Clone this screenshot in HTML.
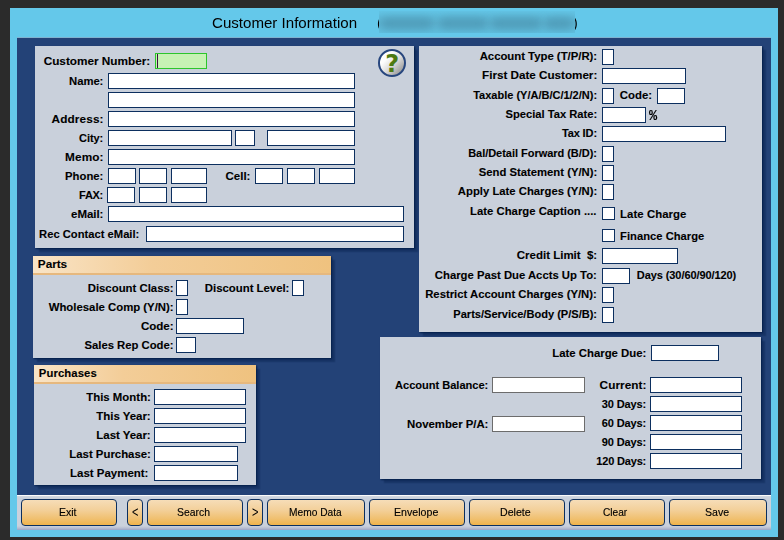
<!DOCTYPE html>
<html lang="en"><head><meta charset="utf-8"><title>Customer Information</title>
<style>
html,body{margin:0;padding:0;background:#2b2b2b}
body{width:784px;height:540px;background:#2b2b2b;position:relative;overflow:hidden;font-family:"Liberation Sans",sans-serif;font-size:12px;color:#000;}
div,span,input,button,label,h1,h2{box-sizing:border-box;margin:0}
.win,.inner,.panel,.hdr,.in,.t,.btn,.bar,.blur,.help,.cb{position:absolute}
.win{left:10px;top:8px;width:768px;height:529px;background:#64c8ea}
.inner{left:17px;top:37px;width:754px;height:458px;background:#234277;border-top:1px solid #7fb2cf}
.panel{background:#c9d0db;box-shadow:1px 1px 1.5px rgba(0,28,70,.9),4px 4px 1.2px rgba(4,32,76,.38)}
.hdr{left:0;top:0;right:0;height:19px;background:linear-gradient(90deg,#f9e4c6 0%,#f3cd98 40%,#efc27f 100%);border-bottom:2px solid #e6b87e}
.in{background:#fff;border:1px solid #0c2f5f;padding:0;border-radius:0;outline:0;-webkit-appearance:none;appearance:none;font:inherit;display:block}
.in.g{border-color:#6c6c6c}
.in.cur{background:#c6f2b4;border-color:#2cc52c}
.caret{position:absolute;left:157px;top:54px;width:1px;height:14px;background:#3a1040}
.t{white-space:nowrap;line-height:16px;height:16px;font-weight:normal;display:block}
.n{-webkit-text-stroke:0.15px #000}
.b{font-weight:bold;-webkit-text-stroke:0.1px #000}
.bar{left:17px;top:495px;width:754px;height:35px;background:linear-gradient(180deg,#fbfbfc 0,#fbfbfc 1px,#d3d8e1 1px,#cad1dc 3px,#cad1dc 31px,#b9bfd2 33px,#9ca4c6 35px)}
.btn{top:499px;height:27px;padding:0;font:inherit;color:inherit;text-align:left;-webkit-appearance:none;appearance:none;display:block;border:1px solid #0c2f5f;border-radius:4px;background:linear-gradient(180deg,#f6ddb8 0%,#f3d09a 40%,#f0c070 75%,#f0b34b 100%)}
.blur{left:379px;top:11px;width:196px;height:22px;overflow:hidden;background:linear-gradient(180deg,#63c5e6 0,#5fbad9 30%,#5db4d2 55%,#5fbad9 80%,#61c0e0 100%)}
.blur i{position:absolute;display:block;top:7px;height:11px;background:#4f9cb9;filter:blur(4px);border-radius:5px}
.help{left:378px;top:49px;width:28px;height:28px;border-radius:50%;border:2px solid #27467e;background:linear-gradient(135deg,#ffffff 0%,#fdfdfd 30%,#dcdcdc 55%,#a0a0a0 85%,#8c8c8c 100%);color:#4d7a12;font-family:'DejaVu Sans',sans-serif;font-weight:bold;font-size:24px;line-height:27px;text-align:center;text-indent:0.5px}
</style></head>
<body>
<div class="win"></div>
<div class="inner"></div>
<h1 class="t" style="left:212.07px;top:15.00px;font-size:15.4px;transform:scaleX(0.98);transform-origin:0 0">Customer Information</h1>
<div class="t" style="left:376.50px;top:15.00px;font-size:15.4px;transform:scaleX(0.95);transform-origin:0 0">(</div>
<div class="t" style="left:573.40px;top:15.00px;font-size:15.4px;transform:scaleX(0.92);transform-origin:0 0">)</div>
<div class="blur"><i style="left:2px;width:52px"></i><i style="left:60px;width:48px"></i><i style="left:112px;width:50px"></i><i style="left:166px;width:28px"></i></div>
<div class="panel" style="left:35px;top:46px;width:379px;height:202px"></div>
<label class="t b" style="left:43.69px;top:53.00px;font-size:11.8px;letter-spacing:-0.02px">Customer Number:</label>
<input type="text" class="in cur" id="f1" aria-label="Customer Number" style="left:155px;top:53px;width:52px;height:16px">
<div class="caret"></div>
<label class="t b" style="left:69.11px;top:73.00px;font-size:11.3px;letter-spacing:-0.07px">Name:</label>
<input type="text" class="in" id="f2" aria-label="Name" style="left:108px;top:73px;width:247px;height:16px">
<input type="text" class="in" id="f3" aria-label="Name" style="left:108px;top:92px;width:247px;height:16px">
<label class="t b" style="left:51.61px;top:111.00px;font-size:11.8px;letter-spacing:0.11px">Address:</label>
<input type="text" class="in" id="f4" aria-label="Address" style="left:108px;top:111px;width:247px;height:16px">
<label class="t b" style="left:79.10px;top:130.00px;font-size:11px;letter-spacing:-0.07px">City:</label>
<input type="text" class="in" id="f5" aria-label="City" style="left:108px;top:130px;width:124px;height:16px">
<input type="text" class="in" id="f6" aria-label="City" style="left:235px;top:130px;width:20px;height:16px">
<input type="text" class="in" id="f7" aria-label="City" style="left:267px;top:130px;width:88px;height:16px">
<label class="t b" style="left:65.11px;top:149.00px;font-size:11.8px;letter-spacing:0.1px">Memo:</label>
<input type="text" class="in" id="f8" aria-label="Memo" style="left:108px;top:149px;width:247px;height:16px">
<label class="t b" style="left:65.09px;top:168.00px;font-size:11.3px">Phone:</label>
<input type="text" class="in" id="f9" aria-label="Phone" style="left:108px;top:168px;width:28px;height:16px">
<input type="text" class="in" id="f10" aria-label="Phone" style="left:139px;top:168px;width:28px;height:16px">
<input type="text" class="in" id="f11" aria-label="Phone" style="left:171px;top:168px;width:36px;height:16px">
<label class="t b" style="left:225.59px;top:168.00px;font-size:11.5px;letter-spacing:-0.02px">Cell:</label>
<input type="text" class="in" id="f12" aria-label="Cell" style="left:255px;top:168px;width:28px;height:16px">
<input type="text" class="in" id="f13" aria-label="Cell" style="left:287px;top:168px;width:28px;height:16px">
<input type="text" class="in" id="f14" aria-label="Cell" style="left:319px;top:168px;width:36px;height:16px">
<label class="t b" style="left:79.10px;top:187.00px;font-size:11px;letter-spacing:-0.3px">FAX:</label>
<input type="text" class="in" id="f15" aria-label="FAX" style="left:107px;top:187px;width:28px;height:16px">
<input type="text" class="in" id="f16" aria-label="FAX" style="left:139px;top:187px;width:28px;height:16px">
<input type="text" class="in" id="f17" aria-label="FAX" style="left:171px;top:187px;width:36px;height:16px">
<label class="t b" style="left:71.09px;top:206.00px;font-size:11.5px;letter-spacing:-0.05px">eMail:</label>
<input type="text" class="in" id="f18" aria-label="eMail" style="left:108px;top:206px;width:296px;height:16px">
<label class="t b" style="left:39.08px;top:226.00px;font-size:11.2px;letter-spacing:0.01px">Rec Contact eMail:</label>
<input type="text" class="in" id="f19" aria-label="Rec Contact eMail" style="left:146px;top:226px;width:258px;height:16px">
<div class="help">?</div>
<div class="panel" style="left:419px;top:46px;width:343px;height:286px"></div>
<label class="t b" style="left:479.64px;top:48.00px;font-size:11.4px;letter-spacing:-0.03px">Account Type (T/P/R):</label>
<input type="text" class="in" id="f20" aria-label="Account Type (T/P/R)" style="left:602px;top:49px;width:12px;height:16px">
<label class="t b" style="left:482.09px;top:67.00px;font-size:11.7px;letter-spacing:-0.02px">First Date Customer:</label>
<input type="text" class="in" id="f21" aria-label="First Date Customer" style="left:602px;top:68px;width:84px;height:16px">
<label class="t b" style="left:473.19px;top:87.00px;font-size:11px">Taxable (Y/A/B/C/1/2/N):</label>
<input type="text" class="in" id="f22" aria-label="Taxable (Y/A/B/C/1/2/N)" style="left:602px;top:88px;width:12px;height:16px">
<label class="t b" style="left:619.80px;top:87.00px;font-size:11.4px;letter-spacing:-0.02px">Code:</label>
<input type="text" class="in" id="f23" aria-label="Code" style="left:657px;top:88px;width:28px;height:16px">
<label class="t b" style="left:505.62px;top:106.00px;font-size:11.2px;letter-spacing:-0.02px">Special Tax Rate:</label>
<input type="text" class="in" id="f24" aria-label="Special Tax Rate" style="left:602px;top:107px;width:44px;height:16px">
<div class="t b" style="left:648.6px;top:108.4px;font-family:'Liberation Mono',monospace;font-size:15.5px;transform:scaleX(.88);transform-origin:0 0">%</div>
<label class="t b" style="left:561.91px;top:125.00px;font-size:11px;letter-spacing:-0.12px">Tax ID:</label>
<input type="text" class="in" id="f25" aria-label="Tax ID" style="left:602px;top:126px;width:124px;height:16px">
<label class="t b" style="left:468.16px;top:145.00px;font-size:11px;letter-spacing:-0.03px">Bal/Detail Forward (B/D):</label>
<input type="text" class="in" id="f26" aria-label="Bal/Detail Forward (B/D)" style="left:602px;top:146px;width:12px;height:16px">
<label class="t b" style="left:478.77px;top:164.00px;font-size:11.3px;letter-spacing:-0.01px">Send Statement (Y/N):</label>
<input type="text" class="in" id="f27" aria-label="Send Statement (Y/N)" style="left:602px;top:165px;width:12px;height:16px">
<label class="t b" style="left:457.86px;top:183.40px;font-size:11.3px">Apply Late Charges (Y/N):</label>
<input type="text" class="in" id="f28" aria-label="Apply Late Charges (Y/N)" style="left:602px;top:184px;width:12px;height:16px">
<label class="t b" style="left:470.12px;top:203.00px;font-size:11.3px;letter-spacing:0.01px">Late Charge Caption ....</label>
<input type="checkbox" class="in" id="f29" aria-label="Late Charge Caption" style="left:602px;top:207px;width:13px;height:13px">
<label class="t b" style="left:620.10px;top:206.00px;font-size:11.4px;letter-spacing:0.05px">Late Charge</label>
<input type="checkbox" class="in" id="f30" aria-label="Late Charge" style="left:602px;top:229px;width:13px;height:13px">
<label class="t b" style="left:620.12px;top:228.00px;font-size:11.2px;letter-spacing:0.02px">Finance Charge</label>
<label class="t b" style="left:516.84px;top:247.00px;font-size:11.5px;letter-spacing:-0.01px">Credit Limit&nbsp; $:</label>
<input type="text" class="in" id="f31" aria-label="Credit Limit  $" style="left:602px;top:248px;width:76px;height:16px">
<label class="t b" style="left:434.85px;top:267.00px;font-size:11.3px">Charge Past Due Accts Up To:</label>
<input type="text" class="in" id="f32" aria-label="Charge Past Due Accts Up To" style="left:602px;top:268px;width:28px;height:16px">
<label class="t b" style="left:636.80px;top:267.00px;font-size:11px;letter-spacing:-0.08px">Days (30/60/90/120)</label>
<label class="t b" style="left:425.19px;top:286.00px;font-size:11.3px">Restrict Account Charges (Y/N):</label>
<input type="text" class="in" id="f33" aria-label="Restrict Account Charges (Y/N)" style="left:602px;top:287px;width:12px;height:16px">
<label class="t b" style="left:453.32px;top:306.00px;font-size:11.1px;letter-spacing:-0.02px">Parts/Service/Body (P/S/B):</label>
<input type="text" class="in" id="f34" aria-label="Parts/Service/Body (P/S/B)" style="left:602px;top:307px;width:12px;height:16px">
<div class="panel" style="left:33px;top:256px;width:298px;height:102px"><div class="hdr"></div></div>
<h2 class="t b" style="left:37.81px;top:256.00px;font-size:11.8px;letter-spacing:-0.04px">Parts</h2>
<label class="t b" style="left:87.68px;top:280.00px;font-size:11.4px;letter-spacing:-0.01px">Discount Class:</label>
<input type="text" class="in" id="f35" aria-label="Discount Class" style="left:176px;top:280px;width:12px;height:16px">
<label class="t b" style="left:204.86px;top:280.00px;font-size:11.4px;letter-spacing:-0.02px">Discount Level:</label>
<input type="text" class="in" id="f36" aria-label="Discount Level" style="left:292px;top:280px;width:12px;height:16px">
<label class="t b" style="left:48.70px;top:299.00px;font-size:11.4px;letter-spacing:-0.02px">Wholesale Comp (Y/N):</label>
<input type="text" class="in" id="f37" aria-label="Wholesale Comp (Y/N)" style="left:176px;top:299px;width:12px;height:16px">
<label class="t b" style="left:140.90px;top:318.00px;font-size:11.6px;letter-spacing:-0.02px">Code:</label>
<input type="text" class="in" id="f38" aria-label="Code" style="left:176px;top:318px;width:68px;height:16px">
<label class="t b" style="left:84.53px;top:337.00px;font-size:11.3px;letter-spacing:-0.01px">Sales Rep Code:</label>
<input type="text" class="in" id="f39" aria-label="Sales Rep Code" style="left:176px;top:337px;width:20px;height:16px">
<div class="panel" style="left:34px;top:365px;width:222px;height:120px"><div class="hdr"></div></div>
<h2 class="t b" style="left:38.82px;top:365.00px;font-size:11.3px;letter-spacing:0.1px">Purchases</h2>
<label class="t b" style="left:86.18px;top:389.00px;font-size:11.4px;letter-spacing:0.02px">This Month:</label>
<input type="text" class="in" id="f40" aria-label="This Month" style="left:154px;top:389px;width:92px;height:16px">
<label class="t b" style="left:96.31px;top:408.00px;font-size:11.5px;letter-spacing:-0.04px">This Year:</label>
<input type="text" class="in" id="f41" aria-label="This Year" style="left:154px;top:408px;width:92px;height:16px">
<label class="t b" style="left:96.31px;top:427.00px;font-size:11.5px;letter-spacing:-0.04px">Last Year:</label>
<input type="text" class="in" id="f42" aria-label="Last Year" style="left:154px;top:427px;width:92px;height:16px">
<label class="t b" style="left:69.33px;top:446.00px;font-size:11.4px;letter-spacing:-0.01px">Last Purchase:</label>
<input type="text" class="in" id="f43" aria-label="Last Purchase" style="left:154px;top:446px;width:84px;height:16px">
<label class="t b" style="left:70.08px;top:465.00px;font-size:11.5px;letter-spacing:-0.02px">Last Payment:</label>
<input type="text" class="in" id="f44" aria-label="Last Payment" style="left:154px;top:465px;width:84px;height:16px">
<div class="panel" style="left:380px;top:337px;width:381px;height:142px"></div>
<label class="t b" style="left:552.22px;top:345.00px;font-size:11.4px;letter-spacing:-0.01px">Late Charge Due:</label>
<input type="text" class="in" id="f45" aria-label="Late Charge Due" style="left:651px;top:345px;width:68px;height:16px">
<label class="t b" style="left:395.02px;top:377.00px;font-size:11.1px;letter-spacing:-0.03px">Account Balance:</label>
<input type="text" class="in g" id="f46" aria-label="Account Balance" style="left:492px;top:377px;width:93px;height:16px">
<label class="t b" style="left:407.10px;top:416.00px;font-size:11.4px;letter-spacing:-0.03px">November P/A:</label>
<input type="text" class="in g" id="f47" aria-label="November P/A" style="left:492px;top:416px;width:93px;height:16px">
<label class="t b" style="left:599.59px;top:377.00px;font-size:11.8px;letter-spacing:0.06px">Current:</label>
<input type="text" class="in" id="f48" aria-label="Current" style="left:650px;top:377px;width:92px;height:16px">
<label class="t b" style="left:601.85px;top:396.00px;font-size:11px;letter-spacing:-0.12px">30 Days:</label>
<input type="text" class="in" id="f49" aria-label="30 Days" style="left:650px;top:396px;width:92px;height:16px">
<label class="t b" style="left:601.85px;top:415.00px;font-size:11px;letter-spacing:-0.12px">60 Days:</label>
<input type="text" class="in" id="f50" aria-label="60 Days" style="left:650px;top:415px;width:92px;height:16px">
<label class="t b" style="left:601.85px;top:434.00px;font-size:11px;letter-spacing:-0.12px">90 Days:</label>
<input type="text" class="in" id="f51" aria-label="90 Days" style="left:650px;top:434px;width:92px;height:16px">
<label class="t b" style="left:596.34px;top:453.00px;font-size:11px;letter-spacing:-0.18px">120 Days:</label>
<input type="text" class="in" id="f52" aria-label="120 Days" style="left:650px;top:453px;width:92px;height:16px">
<div class="bar"></div>
<button type="button" class="btn" style="left:21px;width:96px"><span class="t n" style="position:absolute;left:37.00px;top:4.00px;font-size:11.2px;transform:scaleX(0.936);transform-origin:0 0">Exit</span></button>
<button type="button" class="btn" style="left:127px;width:16px"><span class="t" style="position:absolute;left:3.90px;top:4.00px;font-size:14px;transform:scaleX(0.787);transform-origin:0 0">&lt;</span></button>
<button type="button" class="btn" style="left:147px;width:96px"><span class="t n" style="position:absolute;left:29.10px;top:4.00px;font-size:11.2px;transform:scaleX(0.931);transform-origin:0 0">Search</span></button>
<button type="button" class="btn" style="left:247px;width:16px"><span class="t" style="position:absolute;left:4.00px;top:4.00px;font-size:14px;transform:scaleX(0.787);transform-origin:0 0">&gt;</span></button>
<button type="button" class="btn" style="left:267px;width:98px"><span class="t n" style="position:absolute;left:20.51px;top:4.00px;font-size:11.2px;transform:scaleX(0.911);transform-origin:0 0">Memo Data</span></button>
<button type="button" class="btn" style="left:369px;width:96px"><span class="t n" style="position:absolute;left:23.90px;top:4.00px;font-size:11.2px;transform:scaleX(0.95);transform-origin:0 0">Envelope</span></button>
<button type="button" class="btn" style="left:469px;width:96px"><span class="t n" style="position:absolute;left:30.34px;top:4.00px;font-size:11.2px;transform:scaleX(0.95);transform-origin:0 0">Delete</span></button>
<button type="button" class="btn" style="left:569px;width:96px"><span class="t n" style="position:absolute;left:33.20px;top:4.00px;font-size:11.2px;transform:scaleX(0.907);transform-origin:0 0">Clear</span></button>
<button type="button" class="btn" style="left:669px;width:98px"><span class="t n" style="position:absolute;left:35.31px;top:4.00px;font-size:11.2px;transform:scaleX(0.945);transform-origin:0 0">Save</span></button>
</body></html>
